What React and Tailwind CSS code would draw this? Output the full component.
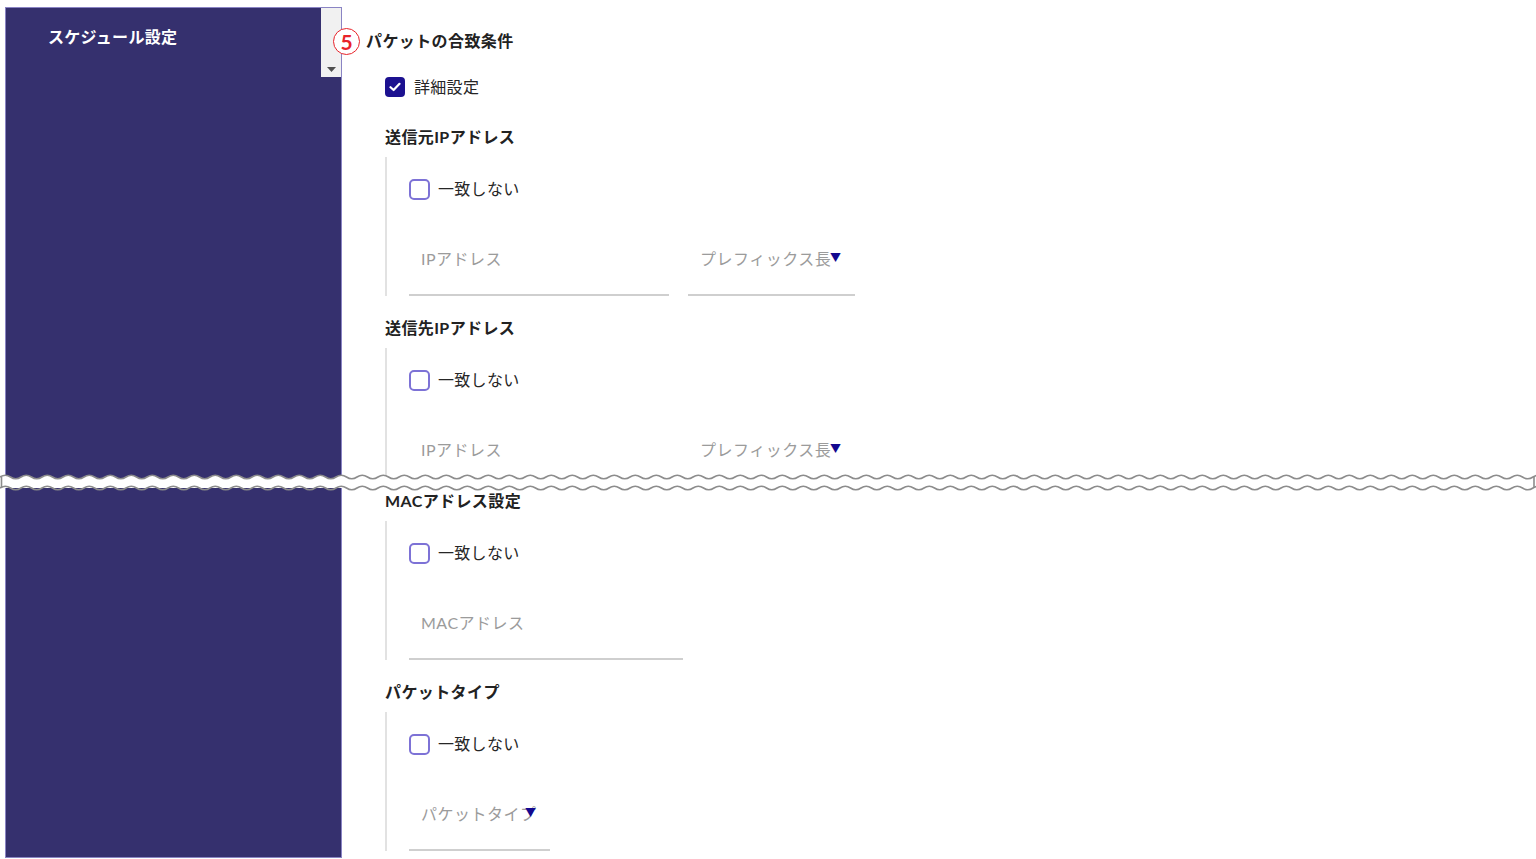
import React from "react";

const FONT = "font-['Lato','Noto_Sans_CJK_JP',sans-serif]";

function wavePath(y0, width, step = 21, amp = 1.8) {
  let d = `M 0 ${y0}`;
  for (let x = 0; x < width; x += step) {
    d += ` q ${step / 4} ${-amp * 2} ${step / 2} 0 t ${step / 2} 0`;
  }
  return d;
}

const Check = ({ checked, children, className = "" }) => (
  <label className={"flex items-center h-6 " + className}>
    {checked ? (
      <span className="w-5 h-5 rounded-[4px] bg-[#1c1190] flex items-center justify-center mr-[9px]">
        <svg width="12" height="10" viewBox="0 0 12 10"><path d="M1.5 5.2 L4.6 8 L10.5 1.8" fill="none" stroke="white" strokeWidth="2.2" strokeLinecap="round" strokeLinejoin="round" /></svg>
      </span>
    ) : (
      <span className="w-[21px] h-[21px] rounded-[5px] border-2 border-[#7d72d6] mr-2 bg-white" />
    )}
    <span className="text-[16px] text-[#262626] tracking-[0.3px]">{children}</span>
  </label>
);

const Field = ({ label, w, select }) => (
  <div className={"relative mt-[46px] pb-[23px] border-b-2 border-[#cfcfcf] " + w}>
    <div className="pl-3 h-6 leading-6 text-[16px] text-[#9b9b9b] tracking-[0.5px] whitespace-nowrap">{label}</div>
    {select && <span className="absolute right-[14px] top-[5px] text-[11px] leading-none text-[#13088f]">▼</span>}
  </div>
);

const Section = ({ title, children }) => (
  <div className="mt-5 first:mt-0">
    <h3 className="text-[16px] leading-6 font-bold text-[#222] tracking-[0.4px]">{title}</h3>
    <div className="mt-2 pt-5 pl-[22px] border-l-2 border-[#e2e2e2]">{children}</div>
  </div>
);

const IpBody = () => (
  <>
    <Check>一致しない</Check>
    <div className="flex gap-[19px]">
      <Field label="IPアドレス" w="w-[260px]" />
      <Field label="プレフィックス長" w="w-[167px]" select />
    </div>
  </>
);

export default function App() {
  return (
    <div className={"relative w-[1536px] h-[859px] bg-white overflow-hidden " + FONT}>
      {/* upper half */}
      <div className="flex h-[482px] overflow-hidden">
        <aside className="ml-[5px] mt-[7px] w-[337px] bg-[#35306e] border border-[#8a84c4] self-stretch">
          <div className="flex h-[69px]">
            <div className="flex-1 pl-[42px] pt-[17px] text-[16px] leading-6 font-bold text-white tracking-[0.3px]">スケジュール設定</div>
            <div className="w-5 bg-[#f1f1f1] flex items-end justify-center pb-[5px]">
              <svg width="9" height="5" viewBox="0 0 9 5"><path d="M0 0 H9 L4.5 5 Z" fill="#505050" /></svg>
            </div>
          </div>
        </aside>
        <main className="pl-[43px] pt-[29px]">
          <div className="relative flex items-center h-6 -ml-[19px]">
            <span className="absolute -left-[33px] top-[-1px] w-[27px] h-[27px] rounded-full border border-[#e8232a] bg-white flex items-center justify-center text-[21px] font-bold text-[#e8232a] leading-none">5</span>
            <h2 className="text-[16px] font-bold text-[#222] tracking-[0.4px]">パケットの合致条件</h2>
          </div>
          <Check checked className="mt-[22px]">詳細設定</Check>
          <div className="mt-[26px]">
            <Section title="送信元IPアドレス"><IpBody /></Section>
            <Section title="送信先IPアドレス"><IpBody /></Section>
          </div>
        </main>
      </div>

      {/* lower half */}
      <div className="flex h-[377px] overflow-hidden">
        <aside className="ml-[5px] w-[337px] h-[376px] bg-[#35306e] border border-[#8a84c4]" />
        <main className="pl-[43px] pt-[7px]">
          <Section title="MACアドレス設定">
            <Check>一致しない</Check>
            <Field label="MACアドレス" w="w-[274px]" />
          </Section>
          <Section title="パケットタイプ">
            <Check>一致しない</Check>
            <div className="mt-[3px]">
              <Field label="パケットタイプ" w="w-[141px]" select />
            </div>
          </Section>
        </main>
      </div>

      {/* page break marker */}
      <svg className="absolute left-0 top-[470px]" width="1536" height="24" viewBox="0 0 1536 24">
        <path d={wavePath(7, 1536) + " L 1534 7 L 1534 18 L 0 18 Z"} fill="white" stroke="none" />
        <path d={wavePath(7, 1536)} fill="none" stroke="#8c8c8c" strokeWidth="1.6" />
        <path d={wavePath(18, 1536)} fill="none" stroke="#8c8c8c" strokeWidth="1.6" />
        <path d="M 1534 7 V 18 M 1.5 7 V 18" stroke="#8c8c8c" strokeWidth="1.6" />
      </svg>
    </div>
  );
}
